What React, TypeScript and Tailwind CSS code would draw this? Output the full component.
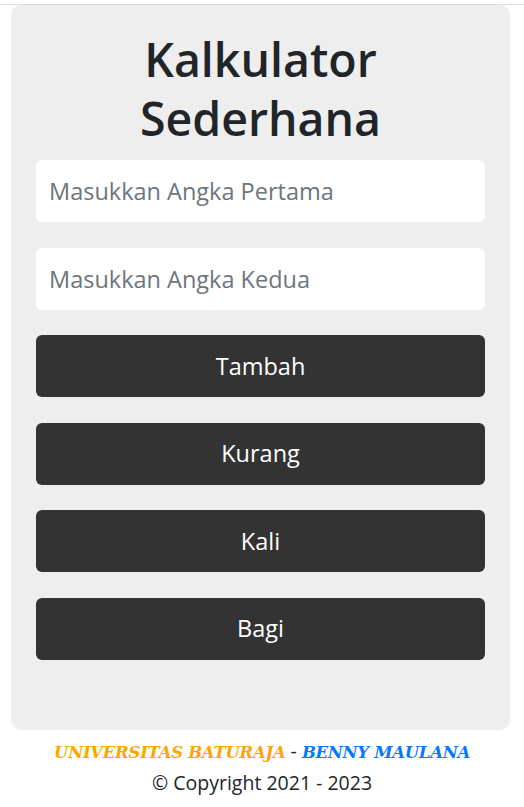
import React, { useState } from "react";

const font = { fontFamily: '"Open Sans", "Noto Sans", sans-serif' };
const slab = { fontFamily: '"DejaVu Serif", serif' };

export default function App() {
  const [a, setA] = useState("");
  const [b, setB] = useState("");

  const ops = ["Tambah", "Kurang", "Kali", "Bagi"];

  return (
    <div className="min-h-screen bg-white pt-[4px]" style={font}>
      <div className="border-t border-[#dedede]" />
      <div className="mx-[11px] w-[499px] rounded-[10px] bg-[#eeeeee] px-[25px] pt-[25px] pb-[70px]">
        <h1 className="text-center text-[46.5px] leading-[59px] font-semibold text-[#212529]">
          Kalkulator
          <br />
          Sederhana
        </h1>
        <div className="mt-[12px] flex flex-col gap-[25.6px]">
          <input
            value={a}
            onChange={(e) => setA(e.target.value)}
            placeholder="Masukkan Angka Pertama"
            className="h-[62px] w-full rounded-[6px] bg-white px-[13px] text-[23.5px] text-[#212529] outline-none placeholder-[#6c757d]"
          />
          <input
            value={b}
            onChange={(e) => setB(e.target.value)}
            placeholder="Masukkan Angka Kedua"
            className="h-[62px] w-full rounded-[6px] bg-white px-[13px] text-[23.5px] text-[#212529] outline-none placeholder-[#6c757d]"
          />
          {ops.map((op) => (
            <button
              key={op}
              className="h-[62px] w-full rounded-[6px] bg-[#333333] text-[23.5px] text-white"
            >
              {op}
            </button>
          ))}
        </div>
      </div>
      <div className="mt-[6px] text-center text-[19.5px] leading-[30px] text-[#212529]">
        <div>
          <span className="text-[16.5px] tracking-[-0.3px] font-bold italic text-[#ffa500]" style={slab}>
            UNIVERSITAS BATURAJA
          </span>{" "}
          -{" "}
          <span className="text-[16.5px] tracking-[-0.3px] font-bold italic text-[#007bff]" style={slab}>
            BENNY MAULANA
          </span>
        </div>
        <div>© Copyright 2021 - 2023</div>
      </div>
    </div>
  );
}
